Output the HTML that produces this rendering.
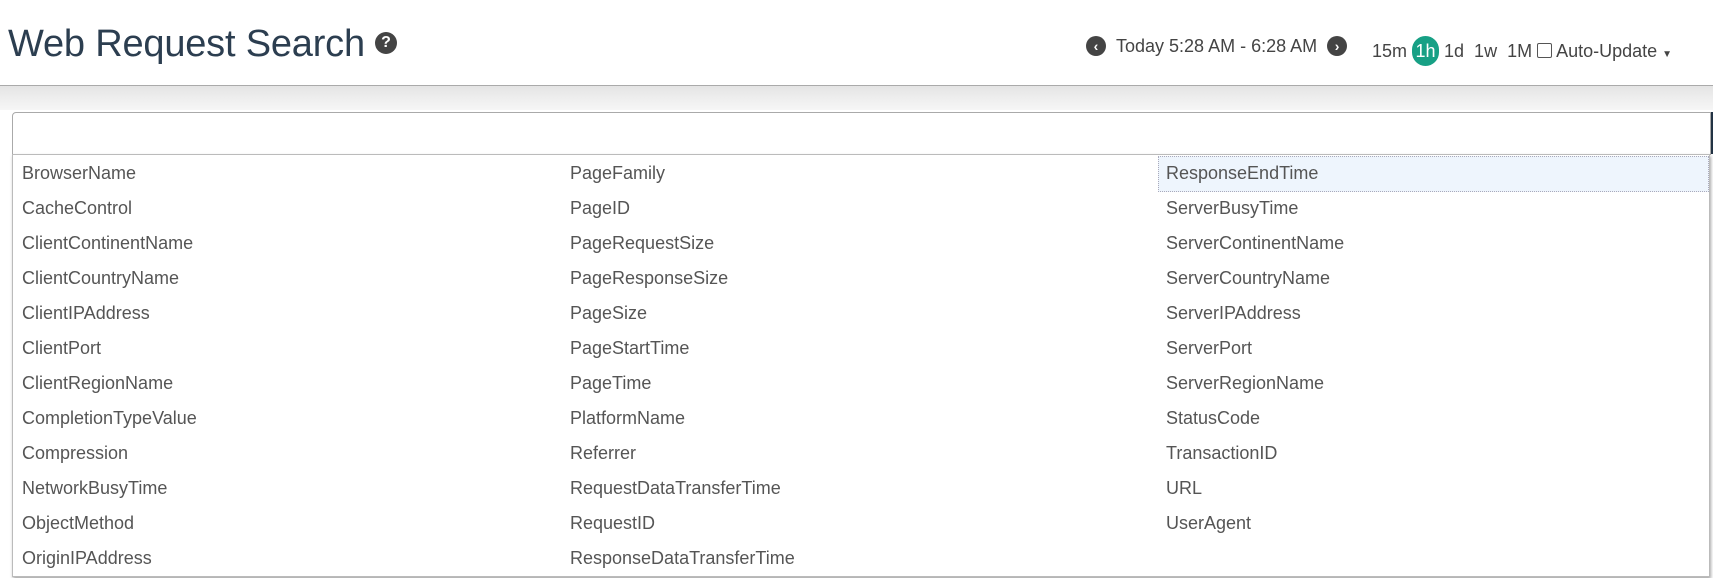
<!DOCTYPE html>
<html><head><style>
body{margin:0;width:1713px;height:578px;background:#fff;font-family:"Liberation Sans",sans-serif;position:relative;overflow:hidden}
.title{position:absolute;left:8px;top:23px;font-size:38px;color:#2c3e50;letter-spacing:-0.2px}
.q{display:inline-block;width:22px;height:22px;border-radius:50%;background:#444;color:#fff;font-size:16px;font-weight:bold;text-align:center;line-height:22px;vertical-align:middle;position:relative;top:-3px;margin-left:10px}
.band{position:absolute;left:0;top:85px;width:1713px;height:24px;background:linear-gradient(#e4e4e4,#ececec 40%,#f6f6f6);border-top:1px solid #aaa}
.bar{position:absolute;top:36px;font-size:18px;color:#444;white-space:nowrap}
.circ{display:inline-block;width:20px;height:20px;border-radius:50%;background:#444;color:#fff;font-size:14px;text-align:center;line-height:20px;font-weight:bold;vertical-align:1px}
.input{position:absolute;left:12px;top:112px;width:1697px;height:41px;border:1px solid #aaa;border-radius:4px 0 0 0;background:#fff}
.dd{position:absolute;left:12px;top:154px;width:1696px;height:421px;border:1px solid #bbb;background:#fff;box-shadow:1px 2px 3px rgba(0,0,0,.35)}
.col{position:absolute;top:0}
.col div{height:35px;line-height:37px;font-size:18px;color:#555;padding-left:9px;white-space:nowrap}
.hl{position:absolute;left:1145px;top:1px;width:549px;height:34px;background:#eef5fd;border:1px dotted #aab}
</style></head><body>
<div class="title">Web Request Search<span class="q">?</span></div>
<div class="bar" style="left:1086px"><span class="circ">&#8249;</span><span style="margin-left:10px">Today 5:28 AM - 6:28 AM</span><span class="circ" style="margin-left:10px">&#8250;</span></div>
<div class="bar" style="left:1372px">15m <span style="display:inline-block;background:#17a085;color:#fff;border-radius:14px;width:27px;height:30px;line-height:30px;text-align:center">1h</span> 1d&nbsp; 1w&nbsp; 1M <span style="display:inline-block;width:13px;height:13px;border:1px solid #555;border-radius:2px;vertical-align:-1px"></span> Auto-Update <span style="font-size:10px">&#9660;</span></div>
<div class="band"></div>
<div style="position:absolute;left:1709px;top:112px;width:4px;height:42px;background:#234"></div>
<div class="input"></div>
<div class="dd">
<div class="hl"></div>
<div class="col" style="left:0"><div>BrowserName</div><div>CacheControl</div><div>ClientContinentName</div><div>ClientCountryName</div><div>ClientIPAddress</div><div>ClientPort</div><div>ClientRegionName</div><div>CompletionTypeValue</div><div>Compression</div><div>NetworkBusyTime</div><div>ObjectMethod</div><div>OriginIPAddress</div></div>
<div class="col" style="left:548px"><div>PageFamily</div><div>PageID</div><div>PageRequestSize</div><div>PageResponseSize</div><div>PageSize</div><div>PageStartTime</div><div>PageTime</div><div>PlatformName</div><div>Referrer</div><div>RequestDataTransferTime</div><div>RequestID</div><div>ResponseDataTransferTime</div></div>
<div class="col" style="left:1144px"><div>ResponseEndTime</div><div>ServerBusyTime</div><div>ServerContinentName</div><div>ServerCountryName</div><div>ServerIPAddress</div><div>ServerPort</div><div>ServerRegionName</div><div>StatusCode</div><div>TransactionID</div><div>URL</div><div>UserAgent</div></div>
</div>
</body></html>
